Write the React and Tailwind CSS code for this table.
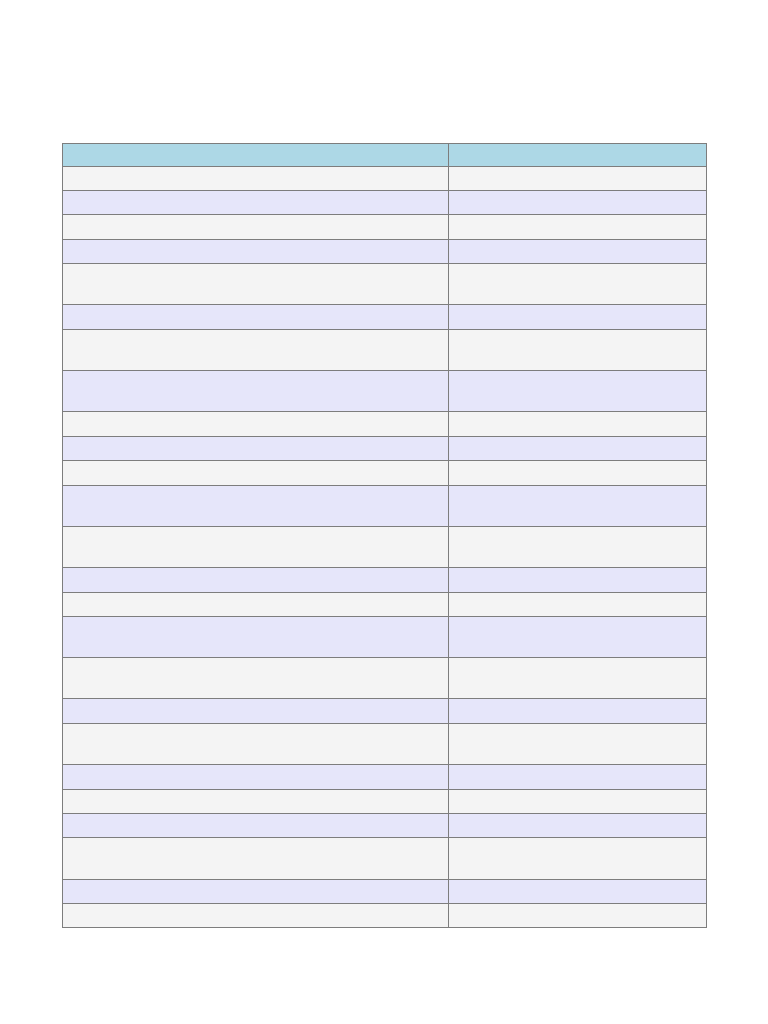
// Empty striped two-column table
const rows = [1, 1, 1, 1, 2, 1, 2, 2, 1, 1, 1, 2, 2, 1, 1, 2, 2, 1, 2, 1, 1, 1, 2, 1, 1];

export default function App() {
  return (
    <div className="min-h-screen bg-white pt-[143px]">
      <table className="mx-auto w-[645px] border-collapse table-fixed"
        style={{ fontFamily: "'Liberation Sans', Arial, sans-serif" }}>
        <thead>
          <tr className="h-[22.5px] bg-[#add8e6]">
            <th className="w-[60%] border border-[#7d7d7d]"></th>
            <th className="border border-[#7d7d7d]"></th>
          </tr>
        </thead>
        <tbody>
          {rows.map((lines, i) => (
            <tr key={i}
              className={`${lines === 2 ? "h-[41.3px]" : "h-[24.4px]"}
                          ${i % 2 === 0 ? "bg-[#f4f4f4]" : "bg-[#e6e6fa]"}`}>
              <td className="border border-[#7d7d7d]"></td>
              <td className="border border-[#7d7d7d]"></td>
            </tr>
          ))}
        </tbody>
      </table>
    </div>
  );
}
